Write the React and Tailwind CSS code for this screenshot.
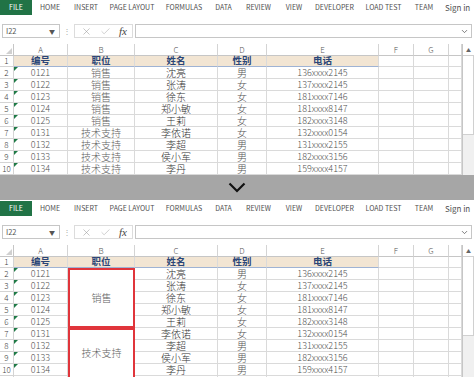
import React from 'react';
import { X, Check, ChevronDown } from 'lucide-react';

const tabs = [
  ['HOME', 'w-[36px]'],
  ['INSERT', 'w-[36px]'],
  ['PAGE LAYOUT', 'w-[56px]'],
  ['FORMULAS', 'w-[48px]'],
  ['DATA', 'w-[31px]'],
  ['REVIEW', 'w-[39px]'],
  ['VIEW', 'w-[32px]'],
  ['DEVELOPER', 'w-[49px]'],
  ['LOAD TEST', 'w-[49px]'],
  ['TEAM', 'w-[32px]'],
];

const rows = [
  ['0121', '销售', '沈亮', '男', '136xxxx2145'],
  ['0122', '销售', '张涛', '女', '137xxxx2145'],
  ['0123', '销售', '徐东', '女', '181xxxx7146'],
  ['0124', '销售', '郑小敏', '女', '181xxxx8147'],
  ['0125', '销售', '王莉', '女', '182xxxx3148'],
  ['0131', '技术支持', '李依诺', '女', '132xxxx0154'],
  ['0132', '技术支持', '李超', '男', '131xxxx2155'],
  ['0133', '技术支持', '侯小军', '男', '182xxxx3156'],
  ['0134', '技术支持', '李丹', '男', '159xxxx4157'],
];

function Ribbon() {
  return (
    <div className="flex h-[15px] items-center bg-white text-[7px] text-[#505050]">
      <div className="flex h-full w-[32px] items-center justify-center bg-[#217346] text-white">FILE</div>
      {tabs.map(([t, w]) => (
        <div key={t} className={`${w} text-center whitespace-nowrap`}>{t}</div>
      ))}
      <div className="ml-[5px] whitespace-nowrap text-[8px]">Sign in</div>
    </div>
  );
}

function FormulaBar() {
  return (
    <div className="mt-[9px] flex h-[14px] items-stretch text-[#555]">
      <div className="ml-[2px] flex w-[58px] items-center justify-between border border-[#c6c6c6] pl-[3px] pr-[4px] text-[7.5px]">
        <span>I22</span>
        <span className="text-[6px]">▼</span>
      </div>
      <div className="flex w-[14px] items-center justify-center text-[8px] text-[#aaa]">⋮</div>
      <div className="flex w-[59px] items-center border border-[#dcdcdc]">
        <X size={11} strokeWidth={1.2} className="ml-[6px] text-[#999]" />
        <Check size={11} strokeWidth={1.2} className="ml-[8px] text-[#aaa]" />
        <span className="ml-[8px] font-['Liberation_Serif',serif] text-[11px] italic leading-none text-[#444]">fx</span>
      </div>
      <div className="ml-[2px] mr-[2px] flex flex-1 items-center justify-end border border-[#c6c6c6] pr-[2px]">
        <ChevronDown size={9} strokeWidth={2} className="text-[#555]" />
      </div>
    </div>
  );
}

const cell = 'relative flex items-center justify-center border-r border-b border-[#dadada] whitespace-nowrap';

function Sheet({ merged }) {
  const letters = ['A', 'B', 'C', 'D', 'E', 'F', 'G', ''];
  const cells = [];

  cells.push(
    <div key="corner" className="relative border-r border-b border-[#c6c6c6] bg-white">
      <div className="absolute bottom-[1px] right-[1px] h-0 w-0 border-b-[6px] border-l-[6px] border-b-[#d0d0d0] border-l-transparent" />
    </div>
  );
  letters.forEach((l, i) => {
    cells.push(
      <div key={'h' + i} className="flex items-center justify-center border-r border-b border-[#d4d4d4] border-b-[#c6c6c6] text-[8px] text-[#555]">
        {l}
      </div>
    );
  });

  cells.push(
    <div key="r1" className="flex items-center justify-center border-r border-b border-[#d4d4d4] text-[8px] text-[#444]">1</div>
  );
  ['编号', '职位', '姓名', '性别', '电话'].forEach((h) => {
    cells.push(
      <div key={h} className={`${cell} border-b-[#9fb3d4] bg-[#f2e5d3] text-[9.5px] font-bold text-[#2a4577]`}>{h}</div>
    );
  });
  for (let i = 0; i < 3; i++) cells.push(<div key={'r1e' + i} className={cell} />);

  const data = [...rows, ['', '', '', '', '']];
  data.forEach((r, idx) => {
    const n = idx + 2;
    cells.push(
      <div key={'n' + n} className="flex items-center justify-center border-r border-b border-[#d4d4d4] text-[8px] text-[#444]">
        {r[0] ? n : ''}
      </div>
    );
    cells.push(
      <div key={'a' + n} className={`${cell} text-[9px]`}>
        {r[0] && <div className="absolute left-0 top-0 h-0 w-0 border-t-[4px] border-r-[4px] border-t-[#1f7a46] border-r-transparent" />}
        {r[0]}
      </div>
    );
    if (!merged) {
      cells.push(<div key={'b' + n} className={`${cell} text-[#606060]`}>{r[1]}</div>);
    } else if (n === 2) {
      cells.push(
        <div key="m1" className="row-span-5 flex items-center justify-center border-2 border-[#e0353b] text-[#606060]">销售</div>
      );
    } else if (n === 7) {
      cells.push(
        <div key="m2" className="row-span-5 flex items-center justify-center border-2 border-[#e0353b] pb-[10px] text-[#606060]">技术支持</div>
      );
    }
    cells.push(<div key={'c' + n} className={`${cell} text-[#333]`}>{r[2]}</div>);
    cells.push(<div key={'d' + n} className={`${cell} text-[#555]`}>{r[3]}</div>);
    cells.push(<div key={'e' + n} className={`${cell} text-[9px]`}>{r[4]}</div>);
    for (let i = 0; i < 3; i++) cells.push(<div key={'x' + n + i} className={cell} />);
  });

  return (
    <div className="mt-[6px] flex">
      <div className="grid w-[462px] grid-cols-[14px_54px_67px_83px_49px_112px_35px_35px_13px] grid-rows-[12px_11px_repeat(10,12px)] text-[10px] font-light leading-none text-[#505050]">
        {cells}
      </div>
      <div className="flex w-[12px] flex-col border-l border-[#c6c6c6]">
        <div className="flex h-[12px] items-center justify-center border-b border-[#d0d0d0] text-[5px] text-[#666]">▲</div>
        <div className="h-[79px] border-b border-r border-[#d0d0d0] bg-white" />
        <div className="flex-1 bg-[#f0f0f0]" />
      </div>
    </div>
  );
}

function Section({ merged, className }) {
  return (
    <div className={`overflow-hidden bg-white ${className}`}>
      <Ribbon />
      <FormulaBar />
      <Sheet merged={merged} />
    </div>
  );
}

export default function App() {
  return (
    <div className="h-[377px] w-[474px] overflow-hidden bg-white font-['Noto_Sans_CJK_SC','Noto_Sans',sans-serif]">
      <Section className="h-[175px]" />
      <div className="flex h-[25px] items-center justify-center bg-[#a6a6a6]">
        <svg width="18" height="11" viewBox="0 0 18 11" className="mr-[1px]">
          <polyline points="1.5,1.5 9,9 16.5,1.5" fill="none" stroke="#111" strokeWidth="2.2" />
        </svg>
      </div>
      <Section merged className="h-[177px] pt-[1px]" />
    </div>
  );
}
